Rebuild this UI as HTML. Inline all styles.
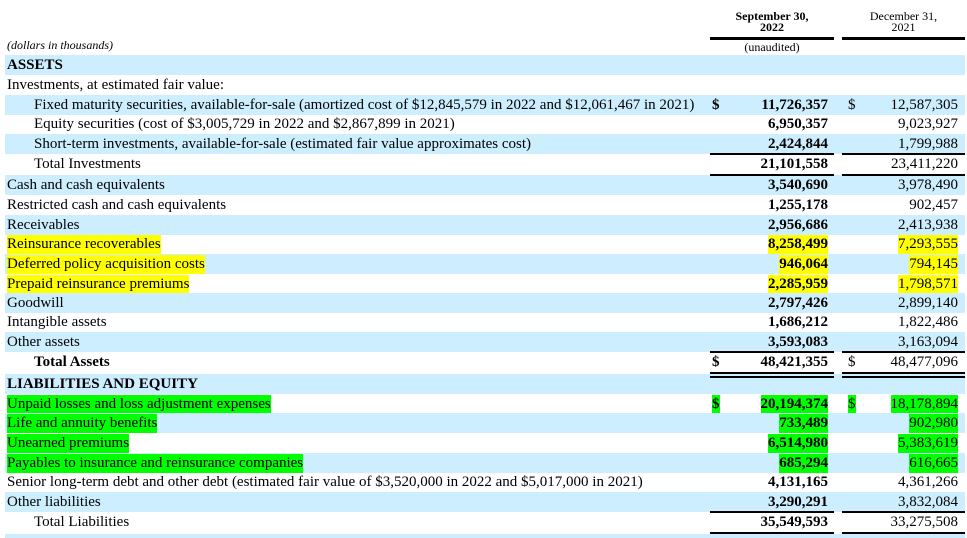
<!DOCTYPE html>
<html><head><meta charset="utf-8"><style>
html,body{margin:0;width:967px;height:538px;overflow:hidden}
body{background:#fff;font-family:"Liberation Serif",serif;color:#000;position:relative}
.r{position:absolute;left:5px;width:960px;height:20px}
.b{background:#cceeff}
.t{position:absolute;top:1px;font-size:15px;line-height:19px;white-space:nowrap}
.l{left:2px}.in{left:29px}
.d1{left:707px}.d2{left:843px}
.n1{right:137px;font-weight:bold}.n2{right:7px}
.y{background:#ffff00}.g{background:#00ff00}
.bo{font-weight:bold}
.ln{position:absolute;height:2px;background:#000}
.h{position:absolute;font-size:12px;line-height:11px;text-align:center}
</style></head><body>
<div class="h bo" style="left:710px;width:124px;top:11px">September 30,<br>2022</div>
<div class="h" style="left:842px;width:123px;top:11px">December 31,<br>2021</div>
<div class="ln" style="left:710px;width:124px;top:37px;height:3px"></div>
<div class="ln" style="left:842px;width:123px;top:37px;height:3px"></div>
<div class="h" style="left:710px;width:124px;top:42px">(unaudited)</div>
<div class="t" style="left:7px;top:38px;font-size:12px;line-height:14px;font-style:italic">(dollars in thousands)</div>

<div class="r b" style="top:55px"><span class="t l bo">ASSETS</span></div>
<div class="r" style="top:75px"><span class="t l">Investments, at estimated fair value:</span></div>
<div class="r b" style="top:95px"><span class="t in">Fixed maturity securities, available-for-sale (amortized cost of $12,845,579 in 2022 and $12,061,467 in 2021)</span><span class="t d1 bo">$</span><span class="t n1">11,726,357</span><span class="t d2">$</span><span class="t n2">12,587,305</span></div>
<div class="r" style="top:114px"><span class="t in">Equity securities (cost of $3,005,729 in 2022 and $2,867,899 in 2021)</span><span class="t n1">6,950,357</span><span class="t n2">9,023,927</span></div>
<div class="r b" style="top:134px"><span class="t in">Short-term investments, available-for-sale (estimated fair value approximates cost)</span><span class="t n1">2,424,844</span><span class="t n2">1,799,988</span></div>
<div class="r" style="top:154px"><span class="t in">Total Investments</span><span class="t n1">21,101,558</span><span class="t n2">23,411,220</span></div>
<div class="r b" style="top:175px"><span class="t l">Cash and cash equivalents</span><span class="t n1">3,540,690</span><span class="t n2">3,978,490</span></div>
<div class="r" style="top:195px"><span class="t l">Restricted cash and cash equivalents</span><span class="t n1">1,255,178</span><span class="t n2">902,457</span></div>
<div class="r b" style="top:215px"><span class="t l">Receivables</span><span class="t n1">2,956,686</span><span class="t n2">2,413,938</span></div>
<div class="r" style="top:234px"><span class="t l y">Reinsurance recoverables</span><span class="t n1 y">8,258,499</span><span class="t n2 y">7,293,555</span></div>
<div class="r b" style="top:254px"><span class="t l y">Deferred policy acquisition costs</span><span class="t n1 y">946,064</span><span class="t n2 y">794,145</span></div>
<div class="r" style="top:274px"><span class="t l y">Prepaid reinsurance premiums</span><span class="t n1 y">2,285,959</span><span class="t n2 y">1,798,571</span></div>
<div class="r b" style="top:293px"><span class="t l">Goodwill</span><span class="t n1">2,797,426</span><span class="t n2">2,899,140</span></div>
<div class="r" style="top:312px"><span class="t l">Intangible assets</span><span class="t n1">1,686,212</span><span class="t n2">1,822,486</span></div>
<div class="r b" style="top:332px"><span class="t l">Other assets</span><span class="t n1">3,593,083</span><span class="t n2">3,163,094</span></div>
<div class="r" style="top:352px;height:22px"><span class="t in bo">Total Assets</span><span class="t d1 bo">$</span><span class="t n1">48,421,355</span><span class="t d2">$</span><span class="t n2">48,477,096</span></div>
<div class="r b" style="top:374px"><span class="t l bo">LIABILITIES AND EQUITY</span></div>
<div class="r" style="top:394px"><span class="t l g">Unpaid losses and loss adjustment expenses</span><span class="t d1 bo g">$</span><span class="t n1 g">20,194,374</span><span class="t d2 g">$</span><span class="t n2 g">18,178,894</span></div>
<div class="r b" style="top:413px"><span class="t l g">Life and annuity benefits</span><span class="t n1 g">733,489</span><span class="t n2 g">902,980</span></div>
<div class="r" style="top:433px"><span class="t l g">Unearned premiums</span><span class="t n1 g">6,514,980</span><span class="t n2 g">5,383,619</span></div>
<div class="r b" style="top:453px"><span class="t l g">Payables to insurance and reinsurance companies</span><span class="t n1 g">685,294</span><span class="t n2 g">616,665</span></div>
<div class="r" style="top:472px"><span class="t l">Senior long-term debt and other debt (estimated fair value of $3,520,000 in 2022 and $5,017,000 in 2021)</span><span class="t n1">4,131,165</span><span class="t n2">4,361,266</span></div>
<div class="r b" style="top:492px"><span class="t l">Other liabilities</span><span class="t n1">3,290,291</span><span class="t n2">3,832,084</span></div>
<div class="r" style="top:512px"><span class="t in">Total Liabilities</span><span class="t n1">35,549,593</span><span class="t n2">33,275,508</span></div>
<div class="r b" style="top:534px"><span class="t l">Redeemable noncontrolling interests</span></div>

<div class="ln" style="left:710px;width:124px;top:153px"></div><div class="ln" style="left:842px;width:123px;top:153px"></div>
<div class="ln" style="left:710px;width:124px;top:174px"></div><div class="ln" style="left:842px;width:123px;top:174px"></div>
<div class="ln" style="left:710px;width:124px;top:351px"></div><div class="ln" style="left:842px;width:123px;top:351px"></div>
<div class="ln" style="left:710px;width:124px;top:372px"></div><div class="ln" style="left:842px;width:123px;top:372px"></div>
<div class="ln" style="left:710px;width:124px;top:376px"></div><div class="ln" style="left:842px;width:123px;top:376px"></div>
<div class="ln" style="left:710px;width:124px;top:511px"></div><div class="ln" style="left:842px;width:123px;top:511px"></div>
<div class="ln" style="left:710px;width:124px;top:532px"></div><div class="ln" style="left:842px;width:123px;top:532px"></div>
</body></html>
